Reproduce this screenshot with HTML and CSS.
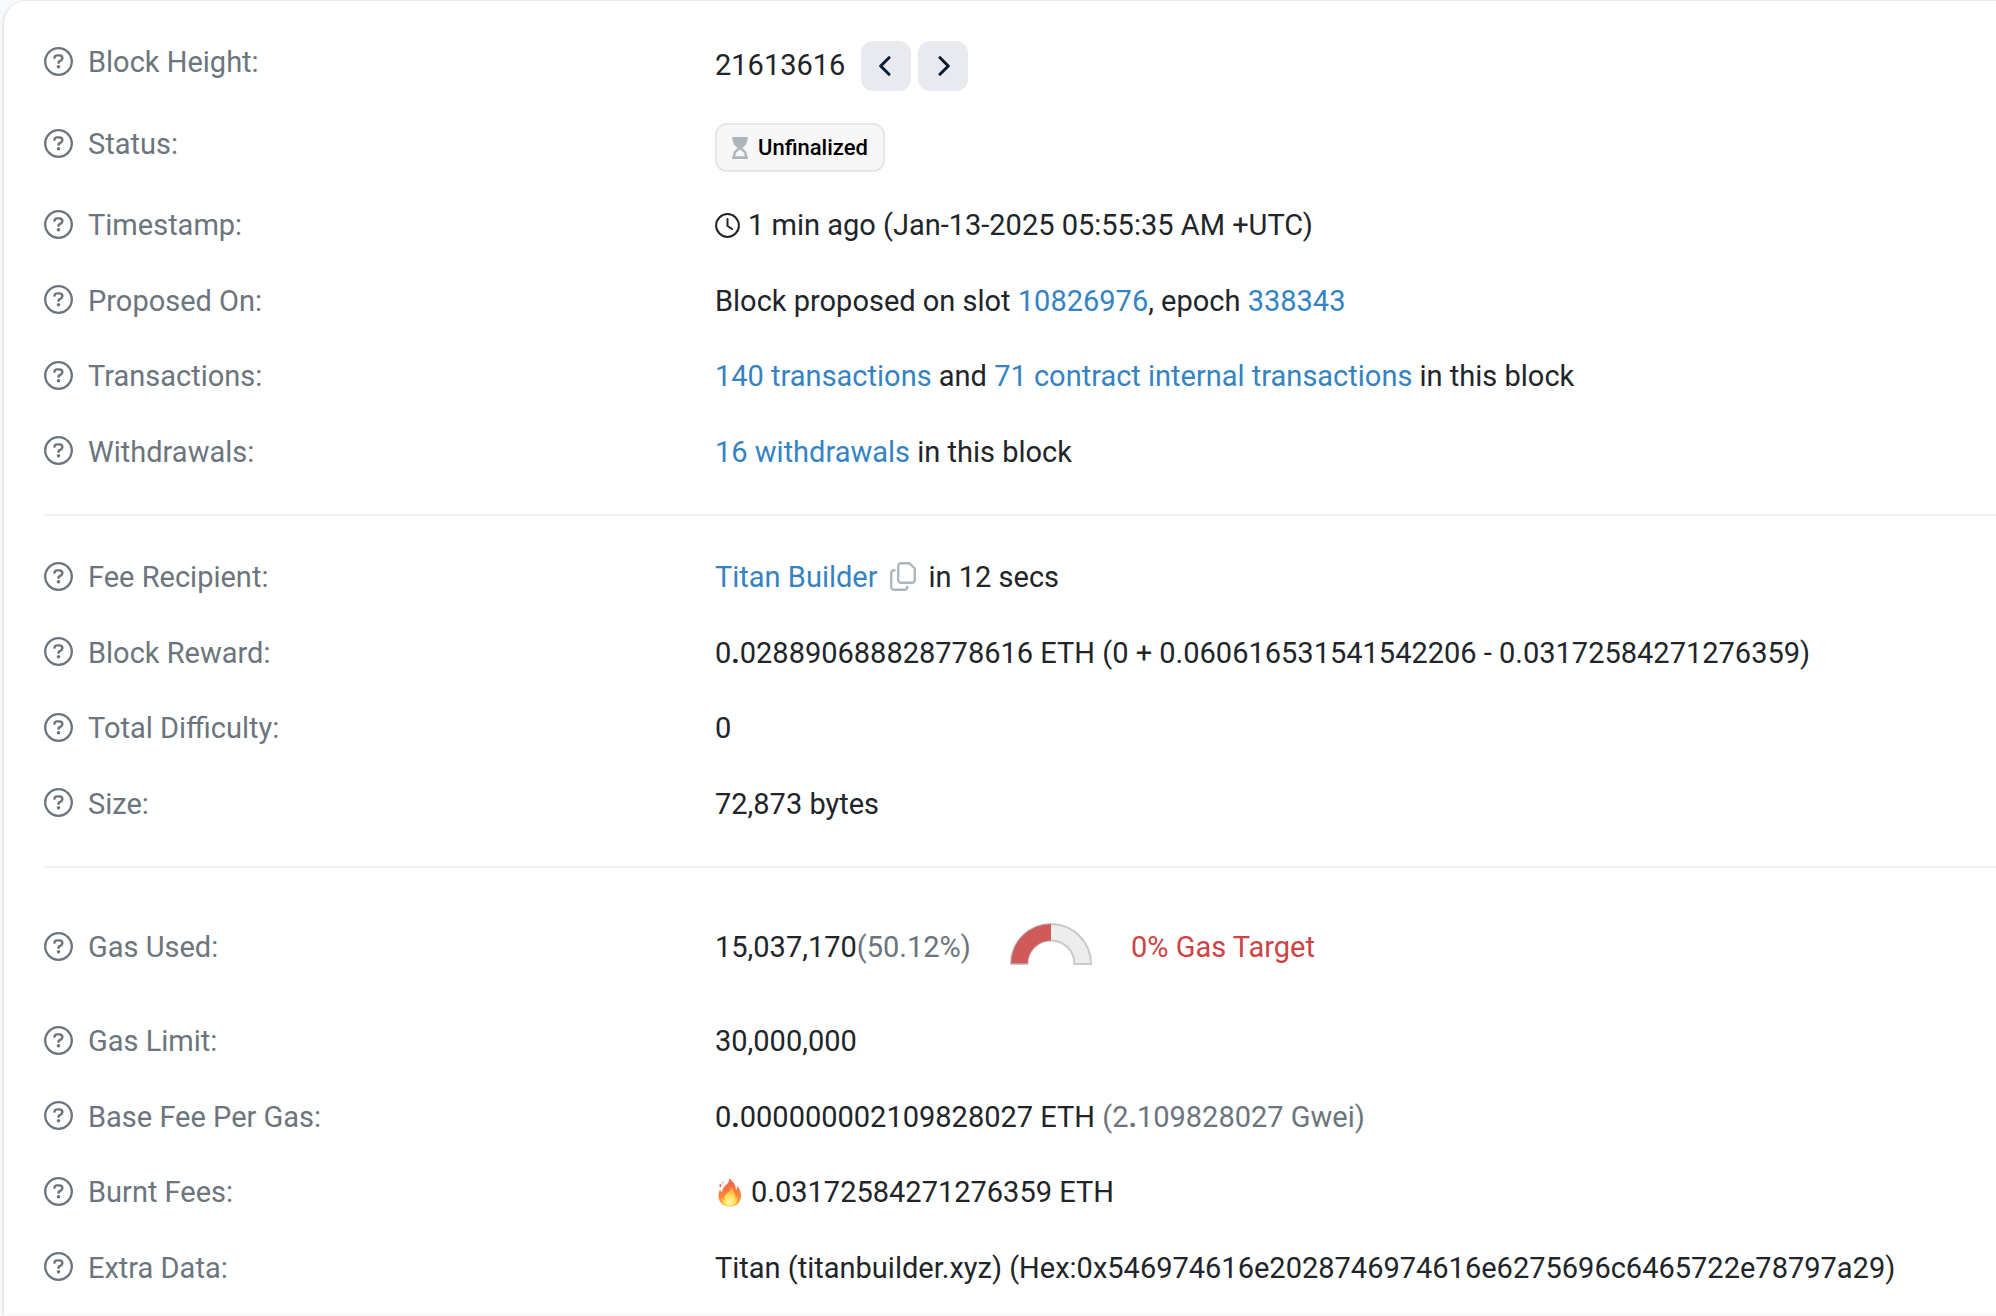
FILE: index.html
```html
<!DOCTYPE html>
<html lang="en">
<head>
  <meta charset="UTF-8" />
  <meta name="viewport" content="width=device-width, initial-scale=1" />
  <title>Ethereum Block 21613616</title>
  <link rel="stylesheet" href="styles.css">
</head>
<body>

  <!-- Shared icons -->
  <svg class="sprite" aria-hidden="true">
    <symbol id="help" viewBox="0 0 29 29">
      <circle cx="14.5" cy="14.5" r="13.3" fill="none" stroke="currentColor" stroke-width="2.3" />
      <path d="M10.5 10.7C10.700 9.200 11.800 8.400 13.300 8.400h2.100c1.700 0 3 1.200 3 2.700 0 1.100-.6 1.900-1.500 2.400l-2.300 1.400v.8" fill="none" stroke="currentColor" stroke-width="2.400" stroke-linecap="round" stroke-linejoin="round" />
      <circle cx="14.5" cy="19.800" r="1.800" fill="currentColor" />
    </symbol>
  </svg>

  <main class="card">
    <dl class="group">
      <div class="row">
        <dt><svg class="help"><use href="#help" /></svg>Block Height:</dt>
        <dd class="inline">
          <span class="height">21613616</span>
          <a class="nav-btn" href="#prev" aria-label="Previous block">
            <svg width="14" height="20" viewBox="0 0 14 20"><path d="M10 1.700L1.700 10l8.300 8.300" /></svg>
          </a>
          <a class="nav-btn" href="#next" aria-label="Next block">
            <svg width="14" height="20" viewBox="0 0 14 20"><path d="M4 1.700L12.300 10 4 18.300" /></svg>
          </a>
        </dd>
      </div>
      <div class="row">
        <dt><svg class="help"><use href="#help" /></svg>Status:</dt>
        <dd class="inline">
          <span class="badge">
            <svg width="16" height="22" viewBox="0 0 16 22">
              <path fill="#adb5bd" fill-rule="evenodd" d="M1 0h14a1 1 0 0 1 1 1v.7a1 1 0 0 1-1 1v1.1c0 2.6-1.2 4.4-3.2 6L10.200 11l1.600 1.200c2 1.600 3.200 3.400 3.200 6v1.100a1 1 0 0 1 1 1v.700a1 1 0 0 1-1 1H1a1 1 0 0 1-1-1v-.7a1 1 0 0 1 1-1v-1.100c0-2.600 1.200-4.400 3.200-6L5.800 11 4.200 9.800C2.200 8.200 1 6.400 1 3.800V2.700a1 1 0 0 1-1-1V1a1 1 0 0 1 1-1zM3.300 19.300h9.400c0-2.500-.7-3.800-2.200-5L8 12.400l-2.500 1.900c-1.500 1.200-2.200 2.500-2.200 5z" />
            </svg>
            Unfinalized
          </span>
        </dd>
      </div>
      <div class="row">
        <dt><svg class="help"><use href="#help" /></svg>Timestamp:</dt>
        <dd class="inline">
          <svg class="clock" width="25" height="25" viewBox="0 0 25 25">
            <circle cx="12.500" cy="12.500" r="11.400" />
            <path d="M12.500 6v7l4.600 3" />
          </svg>
          1 min ago (Jan-13-2025 05:55:35 AM +UTC)
        </dd>
      </div>
      <div class="row">
        <dt><svg class="help"><use href="#help" /></svg>Proposed On:</dt>
        <dd>Block proposed on slot <a href="#slot">10826976</a>, epoch <a href="#epoch">338343</a></dd>
      </div>
      <div class="row">
        <dt><svg class="help"><use href="#help" /></svg>Transactions:</dt>
        <dd><a href="#txs">140 transactions</a> and <a href="#internal">71 contract internal transactions</a> in this block</dd>
      </div>
      <div class="row">
        <dt><svg class="help"><use href="#help" /></svg>Withdrawals:</dt>
        <dd><a href="#withdrawals">16 withdrawals</a> in this block</dd>
      </div>
    </dl>

    <hr>

    <dl class="group">
      <div class="row">
        <dt><svg class="help"><use href="#help" /></svg>Fee Recipient:</dt>
        <dd class="inline">
          <a href="#titan">Titan Builder</a>
          <button class="copy" type="button" aria-label="Copy address">
            <svg width="26" height="29" viewBox="0 0 26 29">
              <path d="M11 1.200h8.300L24.800 6.500V18a2.800 2.800 0 0 1-2.800 2.800H11A2.800 2.800 0 0 1 8.200 18V4A2.800 2.800 0 0 1 11 1.200z" />
              <path d="M5.500 8.200H4A2.800 2.800 0 0 0 1.200 11v14A2.800 2.800 0 0 0 4 27.800h10.500a2.800 2.800 0 0 0 2.800-2.800v-1" />
            </svg>
          </button>
          in 12 secs
        </dd>
      </div>
      <div class="row">
        <dt><svg class="help"><use href="#help" /></svg>Block Reward:</dt>
        <dd>0<b>.</b>028890688828778616 ETH (0 + 0.060616531541542206 - 0.03172584271276359)</dd>
      </div>
      <div class="row">
        <dt><svg class="help"><use href="#help" /></svg>Total Difficulty:</dt>
        <dd>0</dd>
      </div>
      <div class="row">
        <dt><svg class="help"><use href="#help" /></svg>Size:</dt>
        <dd>72,873 bytes</dd>
      </div>
    </dl>

    <hr>

    <dl class="group">
      <div class="row gas">
        <dt><svg class="help"><use href="#help" /></svg>Gas Used:</dt>
        <dd class="inline">
          <span>15,037,170<span class="muted">(50.12%)</span></span>
          <svg class="gauge" width="82" height="42" viewBox="0 0 82 42" role="img" aria-label="50.12% of gas limit used">
            <path d="M1 41a40 40 0 0 1 80 0H64.500a23.500 23.500 0 0 0-47 0z" fill="#ededed" stroke="#c9c9c9" stroke-width="2" />
            <path d="M1 40.500A40 39.500 0 0 1 41 1v16.500a23.500 23.500 0 0 0-23.500 23z" fill="#d05a5a" />
          </svg>
          <span class="danger">0% Gas Target</span>
        </dd>
      </div>
      <div class="row">
        <dt><svg class="help"><use href="#help" /></svg>Gas Limit:</dt>
        <dd>30,000,000</dd>
      </div>
      <div class="row">
        <dt><svg class="help"><use href="#help" /></svg>Base Fee Per Gas:</dt>
        <dd>0<b>.</b>000000002109828027 ETH <span class="muted">(2<b>.</b>109828027 Gwei)</span></dd>
      </div>
      <div class="row">
        <dt><svg class="help"><use href="#help" /></svg>Burnt Fees:</dt>
        <dd class="inline">
          <svg class="fire" width="29" height="29" viewBox="0 0 29 29">
            <defs>
              <linearGradient id="flame" x1="0" y1="0" x2="0" y2="1">
                <stop offset="0" stop-color="#f0604a" />
                <stop offset=".55" stop-color="#fb7f3c" />
                <stop offset="1" stop-color="#ffb43a" />
              </linearGradient>
              <radialGradient id="core" cx=".5" cy=".8" r=".7">
                <stop offset="0" stop-color="#fff9b8" />
                <stop offset=".5" stop-color="#ffdf55" />
                <stop offset="1" stop-color="#fda33e" />
              </radialGradient>
            </defs>
            <path d="M14 .5c4 2.500 7 6.500 7 11.500 1-.8 1.400-2.500 1.200-4.300 2.400 2.800 3.800 6.300 3.800 10C26 24.500 21.500 28.500 15 28.500S3.500 24.500 3.500 18.500c0-2.500.5-5 1.600-7.200.2 1.500.7 2.400 1.700 2.900C7.200 11 9 8.500 11.500 6.500 13.500 4.800 14.500 3 14 .5z" fill="url(#flame)" />
            <path d="M4.800 8.800c-.9-.9-.6-2.100.9-2.800 1.100.8 1 2.300-.1 3.200zM7.200 5.500c.8.200 1.500-.7 1.200-1.700-.9.200-1.300.8-1.200 1.700z" fill="#f0604a" />
            <path d="M16 9c3.500 4 5 7.500 4.200 11.200 1-.4 1.600-1.100 2-2.200C23.500 24 20 28 15 28S6.500 25 6.800 20.500c.8 1 1.600 1.300 2.800 1.200-1-3 .4-5.200 3-7C14.800 13 16 11.500 16 9z" fill="url(#core)" />
          </svg>
          0.03172584271276359 ETH
        </dd>
      </div>
      <div class="row">
        <dt><svg class="help"><use href="#help" /></svg>Extra Data:</dt>
        <dd>Titan (titanbuilder.xyz) (Hex:0x546974616e2028746974616e6275696c6465722e78797a29)</dd>
      </div>
    </dl>
  </main>

</body>
</html>
```
FILE: styles.css
```css
:root {
  --bg: #f8f9fa;
  --card: #ffffff;
  --border: #e9ecef;
  --text: #212529;
  --muted: #6c757d;
  --link: #3483c3;
  --danger: #cc4444;
  --icon: #adb5bd;
}

* {
  box-sizing: border-box;
}

body {
  margin: 0;
  font-family: Roboto, sans-serif;
  font-size: 29px;
  line-height: 1.5;
  background: var(--bg);
  color: var(--text);
}

a {
  color: var(--link);
  text-decoration: none;
}

.sprite {
  position: absolute;
  width: 0;
  height: 0;
}

.card {
  margin-left: 2px;
  padding: 40px 0 24px 40px;
  background: var(--card);
  border: 2px solid var(--border);
  border-top-width: 1px;
  border-right: 0;
  border-bottom: 0;
  border-radius: 24px 0 0 0;
}

.group {
  display: flex;
  flex-direction: column;
  gap: 32px;
  margin: 0;
}

.row {
  display: grid;
  grid-template-columns: 11fr 21fr;
  align-items: start;
}

dt {
  display: flex;
  align-items: center;
  gap: 15px;
  color: var(--muted);
}

dd {
  margin: 0;
}

.inline {
  display: flex;
  align-items: center;
}

.help {
  width: 29px;
  height: 29px;
  margin-bottom: 3px;
}

hr {
  height: 2px;
  margin: 40px 0;
  border: 0;
  background: #eef0f2;
}

.height {
  margin-right: 16px;
}

.nav-btn {
  display: flex;
  align-items: center;
  justify-content: center;
  width: 50px;
  height: 50px;
  border-radius: 12px;
  background: #e9eaef;
}

.nav-btn + .nav-btn {
  margin-left: 7px;
}

.nav-btn path {
  fill: none;
  stroke: #081d35;
  stroke-width: 3;
  stroke-linecap: round;
  stroke-linejoin: round;
}

.badge {
  display: flex;
  align-items: center;
  gap: 10px;
  height: 49px;
  padding: 0 15px;
  border: 2px solid #e6e6e6;
  border-radius: 12px;
  background: #f7f7f7;
  color: #000;
  font-size: 22px;
  font-weight: 500;
}

.clock {
  margin-right: 8px;
  fill: none;
  stroke: var(--text);
  stroke-width: 2;
  stroke-linecap: round;
  stroke-linejoin: round;
}

.copy {
  display: flex;
  margin: 0 13px 3px 12px;
  padding: 0;
  border: 0;
  background: none;
  cursor: pointer;
}

.copy path {
  fill: none;
  stroke: var(--icon);
  stroke-width: 2.4;
  stroke-linejoin: round;
}

.gas {
  min-height: 80px;
  align-items: center;
}

.gauge {
  margin: 0 39px 8px;
}

.fire {
  margin-right: 7px;
}

.muted {
  color: var(--muted);
}

.danger {
  color: var(--danger);
}
```
